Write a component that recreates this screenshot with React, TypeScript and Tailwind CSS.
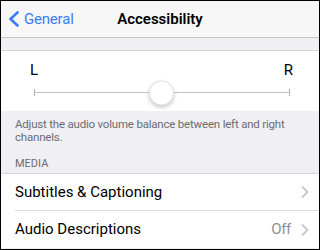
const font = { fontFamily: 'Roboto, "Liberation Sans", sans-serif' }

const Chevron = () => (
  <svg width="8" height="12" viewBox="0 0 8 12" fill="none" className="shrink-0">
    <polyline points="1.5,1 6.5,6 1.5,11" stroke="#c7c7cc" strokeWidth="1.8" strokeLinecap="round" strokeLinejoin="round" />
  </svg>
)

const Row = ({ label, value, last }: { label: string; value?: string; last?: boolean }) => (
  <div className="pl-[14px] bg-white">
    <div className={`h-[37px] pr-[10px] flex items-center justify-between ${last ? '' : 'border-b border-[#dcdce0]'}`}>
      <span className="text-[15px] text-black">{label}</span>
      <div className="flex items-center gap-[10px]">
        {value && <span className="text-[15px] text-[#8e8e93] tracking-[-0.3px]">{value}</span>}
        <Chevron />
      </div>
    </div>
  </div>
)

const App = () => {
  return (
    <div
      className="w-[320px] h-[250px] border border-black bg-[#efeff4] overflow-hidden flex flex-col"
      style={font}
    >
      <header className="h-[37px] shrink-0 bg-[#f7f7f7] border-b border-[#c8c7cc] relative flex items-center">
        <div className="flex items-center pl-[7px] text-[#3b7cf2]">
          <svg width="12" height="16" viewBox="0 0 12 16" fill="none">
            <polyline points="9.5,1.5 2.5,8 9.5,14.5" stroke="currentColor" strokeWidth="2.6" strokeLinecap="round" strokeLinejoin="round" />
          </svg>
          <span className="text-[15px] ml-[4px] tracking-[-0.2px]">General</span>
        </div>
        <span className="absolute left-0 right-0 text-center text-[15px] font-semibold text-black pointer-events-none">
          Accessibility
        </span>
      </header>

      <div className="h-[12px] shrink-0" />

      <section className="h-[61px] shrink-0 bg-white border-t border-[#d6d6da] pl-[29px] pr-[26px] pt-[10px]">
        <div className="flex justify-between text-[15px] text-black leading-[18px]">
          <span>L</span>
          <span>R</span>
        </div>
        <div className="relative ml-[4px] mr-[3px] mt-[10px] h-[7px] flex items-center">
          <div className="w-px h-[7px] bg-[#b5b5b9]" />
          <div className="flex-1 h-px bg-[#c4c4c8]" />
          <div className="w-px h-[7px] bg-[#b5b5b9]" />
          <div className="absolute left-[115px] top-1/2 -translate-y-1/2 w-[25px] h-[25px] rounded-full bg-white border border-[#e2e2e4] shadow-[0_2px_4px_rgba(0,0,0,0.22)]" />
        </div>
      </section>

      <p className="px-[14px] pt-[7px] text-[11.5px] leading-[13px] text-[#6d6d72] tracking-[-0.2px]">
        Adjust the audio volume balance between left and right channels.
      </p>

      <div className="px-[14px] pt-[13px] pb-[3px] text-[11px] leading-[13px] text-[#6d6d72] uppercase">
        Media
      </div>

      <div className="border-t border-[#d6d6da]">
        <Row label="Subtitles & Captioning" />
        <Row label="Audio Descriptions" value="Off" last />
      </div>
    </div>
  )
}

export default App
